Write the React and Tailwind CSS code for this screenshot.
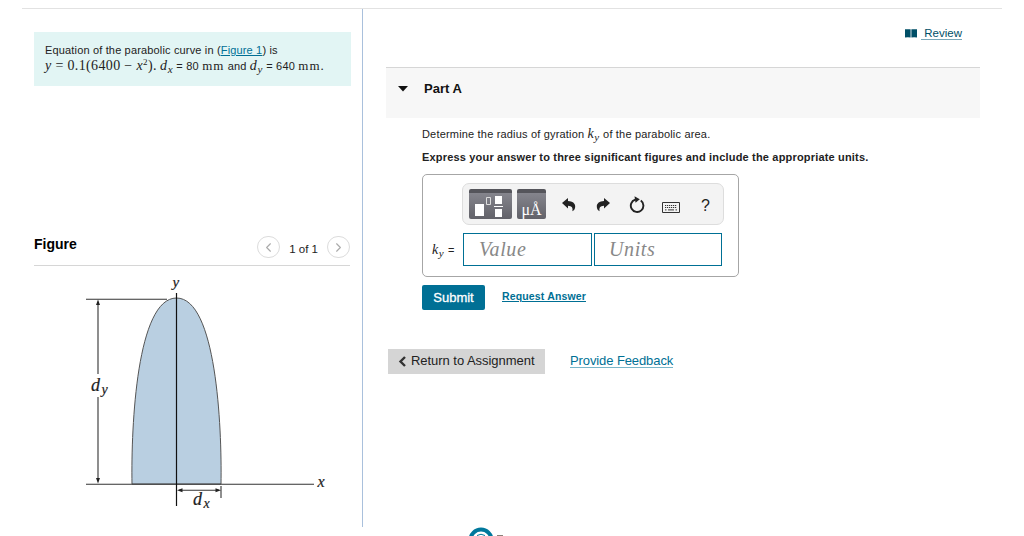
import { ChevronLeft, ChevronRight } from 'lucide-react';

const MathVar = ({ name, sub, className = '' }) => (
    <span className={`font-['Liberation_Serif',serif] text-[14px] tracking-[0.6px] italic ${className}`}>
        {name}
        {sub && <span className="relative top-[3px] text-[11px]">{sub}</span>}
    </span>
);

const Unit = ({ children }) => (
    <span className="font-['Liberation_Serif',serif] text-[13px] tracking-[1px]">{children}</span>
);

const NavButton = ({ label, children }) => (
    <button aria-label={label} className="flex h-[22px] w-[23px] items-center justify-center rounded-full border border-[#dcdcdc] text-[#aaa]">
        {children}
    </button>
);

// Parabola with the dx / dy dimension lines
const ParabolaFigure = () => (
    <svg width="270" height="246" viewBox="70 270 270 246" className="ml-[70px] block" fill="none">
        <path d="M132 484C131 425 137 298 176.500 298C216 298 222 425 221 484Z" fill="#b9cfe1" stroke="#555" />
        <g stroke="#333" strokeWidth="1.100">
            <path d="M86 299.300H167" />
            <path d="M86 484.300H314" />
            <path d="M98 302V374M98 397V481" />
            <path d="M179 490.300H219" />
            <path d="M221 486V498" />
        </g>
        <path d="M176.500 293V506" stroke="#111" strokeWidth="1.200" />
        <g fill="#222">
            <path d="M98 299.500L96 305H100Z" />
            <path d="M98 483.500L96 478H100Z" />
            <path d="M177 490.300L182.500 488.300V492.300Z" />
            <path d="M221 490.300L215.500 488.300V492.300Z" />
        </g>
        <g fill="#222" stroke="#222" strokeWidth="0.200" className="font-['Liberation_Serif',serif] italic">
            <text x="172.500" y="287" fontSize="15">y</text>
            <text x="317.500" y="487" fontSize="16">x</text>
            <text x="91" y="391" fontSize="18">d</text>
            <text x="101.500" y="394" fontSize="14">y</text>
            <text x="193" y="505" fontSize="18">d</text>
            <text x="203.500" y="508" fontSize="14">x</text>
        </g>
    </svg>
);

const TemplateIcon = () => (
    <svg width="43" height="29" viewBox="0 0 43 29">
        <path d="M6 14H15V26H6ZM26 6H33V14H26ZM26 19H33V27H26ZM25 16H34V17H25Z" fill="#fff" />
        <path d="M17.500 7.500H21.500V14.500H17.500Z" fill="none" stroke="#ddd" />
    </svg>
);

const UndoIcon = ({ className = '' }) => (
    <svg width="14" height="16" viewBox="0 0 14 16" className={className}>
        <path d="M0 7L6 2V5C10.500 5.200 13.200 7.300 13.200 10.500C13.200 12.800 12.200 14.500 10.300 15.300C11.200 12 10 9.800 6 9.700V12.500Z" fill="#222" />
    </svg>
);

const ResetIcon = () => (
    <svg width="16" height="17" viewBox="0 0 16 17">
        <path d="M11.800 4.600A6.300 6.300 0 1 1 6.200 3.700" fill="none" stroke="#222" strokeWidth="1.900" />
        <path d="M5.500 0.300L10.800 3.200L6.500 6.700Z" fill="#222" />
    </svg>
);

const KeyboardIcon = () => (
    <svg width="18" height="11" viewBox="0 0 18 11" fill="none" stroke="#333">
        <path d="M0.500 0.500H17.500V10.500H0.500Z" />
        <path d="M3 3.500H15M3 5.500H15" strokeWidth="1.200" strokeDasharray="1.200 0.800" />
        <path d="M3 7.900H4.500M6 7.900H12M13.500 7.900H15" />
    </svg>
);

const Sidebar = () => (
    <aside className="h-[518px] w-[363px] shrink-0 border-r border-[#a9c0dc] pt-[23px]">
        <div className="ml-[34px] h-[54px] w-[317px] bg-[#e2f5f4] pt-[11px] pl-[11px] text-[11px] leading-[15px] whitespace-nowrap text-[#222]">
            <p className="h-[15px] tracking-[0.16px]">
                Equation of the parabolic curve in (<a className="text-[#006f94] underline">Figure 1</a>) is
            </p>
            <p className="h-[17px] leading-[15px] tracking-[0.2px]">
                <span className="font-['Liberation_Serif',serif] text-[14px] tracking-[0.35px]">
                    <i>y</i> = 0.1(6400 − <i>x</i>
                    <span className="relative -top-[5px] text-[9px]">2</span>).
                </span>{' '}
                <MathVar name="d" sub="x" /> = 80 <Unit>mm</Unit> and <MathVar name="d" sub="y" /> = 640 <Unit>mm.</Unit>
            </p>
        </div>

        <div className="mt-[148px] ml-[34px] flex h-[32px] w-[316px] items-start border-b border-[#d6d6d6]">
            <h2 className="text-[14px] leading-[21px] font-bold text-black">Figure</h2>
            <div className="mt-[2px] ml-auto flex items-center">
                <NavButton label="Previous"><ChevronLeft size={15} strokeWidth={1.8} /></NavButton>
                <span className="mr-[9px] ml-[9px] pt-[3px] text-[11.500px] leading-[18px] whitespace-nowrap text-[#222]">1 of 1</span>
                <NavButton label="Next"><ChevronRight size={15} strokeWidth={1.8} /></NavButton>
            </div>
        </div>
        <div className="pt-[4px]">
            <ParabolaFigure />
        </div>
    </aside>
);

const AnswerBox = () => (
    <div className="mt-[9px] h-[103px] w-[317px] rounded-[5px] border border-[#a6a6a6] pt-[8px]">
        <div className="ml-[39px] flex h-[42px] w-[262px] items-center rounded-[7px] border border-[#ddd] bg-[#f3f3f3] pl-[6px] text-[#222]">
            <button className="h-[30px] w-[43px] rounded-[2px] border-t-4 border-[#55555b] bg-linear-to-b from-[#85858d] to-[#626269]">
                <div className="-mt-[4px]"><TemplateIcon /></div>
            </button>
            <button className="ml-[5px] h-[30px] w-[29px] rounded-[2px] border-t-4 border-[#55555b] bg-linear-to-b from-[#85858d] to-[#626269] pt-[6px] font-['Liberation_Serif',serif] text-[16px] leading-[22px] text-white">
                μÅ
            </button>
            <UndoIcon className="ml-[16px]" />
            <UndoIcon className="ml-[20px] -scale-x-100" />
            <div className="mt-[1px] ml-[19px]"><ResetIcon /></div>
            <div className="mt-[7px] ml-[17px]"><KeyboardIcon /></div>
            <span className="mt-[3px] ml-[21px] text-[16px]">?</span>
        </div>
        <div className="mt-[8px] flex h-[33px] items-center text-[11px] text-[#222]">
            <div className="w-[40px] pl-[9px] tracking-[0.7px] whitespace-nowrap">
                <MathVar name="k" sub="y" /> =
            </div>
            <input
                placeholder="Value"
                className="h-[33px] w-[129px] border border-[#007095] bg-white pl-[15px] font-['Liberation_Serif',serif] text-[20px] tracking-[0.6px] italic placeholder:text-[#888]"
            />
            <input
                placeholder="Units"
                className="ml-[2px] h-[33px] w-[128px] border border-[#007095] bg-white pl-[14px] font-['Liberation_Serif',serif] text-[20px] tracking-[0.6px] italic placeholder:text-[#888]"
            />
        </div>
    </div>
);

const MainPanel = () => (
    <main className="flex h-[527px] w-[661px] flex-col overflow-hidden">
        <div className="mt-[16px] mr-[62px] flex h-[17px] items-center justify-end text-[11.500px] text-[#004f67]">
            <svg width="12" height="9" viewBox="0 0 12 9" className="mr-[4px]" fill="#004f67">
                <path d="M0 0.300H5.600V8.500Q3 7.800 0 8.500ZM6.400 0.300H12V8.500Q9 7.800 6.400 8.500Z" />
            </svg>
            <a className="border-b border-[#79a7b8] pl-[3px] leading-[12px]">Review</a>
        </div>

        <div className="mt-[25px] ml-[23px] flex h-[51px] w-[594px] items-start border-t border-[#d6d6d6] bg-[#f7f7f7] pt-[13px]">
            <svg width="10" height="6" viewBox="0 0 10 6" className="mt-[5px] ml-[12px]">
                <path d="M0 0H10L5 5.500Z" fill="#111" />
            </svg>
            <h3 className="ml-[16px] text-[13px] leading-[16px] font-bold text-[#111]">Part A</h3>
        </div>

        <div className="ml-[59px] text-[11px] whitespace-nowrap text-[#222]">
            <p className="mt-[7px] h-[18px] leading-[17px] tracking-[0.18px]">
                Determine the radius of gyration <MathVar name="k" sub="y" /> of the parabolic area.
            </p>
            <p className="mt-[6px] h-[16px] leading-[16px] font-bold tracking-[0.18px]">
                Express your answer to three significant figures and include the appropriate units.
            </p>
            <AnswerBox />
            <div className="mt-[8px] flex h-[25px] items-center">
                <button className="h-[25px] w-[63px] rounded-[2px] bg-[#007095] text-[13px] text-white [-webkit-text-stroke:0.3px_white]">Submit</button>
                <a className="ml-[17px] pb-[1px] text-[10.500px] font-bold tracking-[0.15px] text-[#006f94] underline">Request Answer</a>
            </div>
        </div>

        <div className="mt-[39px] ml-[25px] flex h-[25px] items-center whitespace-nowrap">
            <button className="flex h-[25px] w-[157px] items-center bg-[#d5d5d5] pb-[1px] pl-[10px] text-[13px] tracking-[-0.04px] text-[#222]">
                <svg width="9" height="11" viewBox="0 0 9 11" className="mr-[4px]">
                    <path d="M7 1L2.500 5.500L7 10" fill="none" stroke="#333" strokeWidth="2.400" />
                </svg>
                Return to Assignment
            </button>
            <a className="mb-[1px] ml-[25px] border-b border-[#79b6c9] text-[13px] leading-[13px] tracking-[-0.1px] text-[#007095]">Provide Feedback</a>
        </div>

        {/* footer mark, cut off by the window */}
        <svg width="40" height="9" viewBox="0 0 40 9" className="mt-auto ml-[106px] block">
            <circle cx="12" cy="13" r="10.500" fill="none" stroke="#00789c" strokeWidth="4" />
            <path d="M8 8.500Q12 6 16 8.500" fill="none" stroke="#00789c" strokeWidth="1" />
            <path d="M28 8H34V9H28Z" fill="#8b8179" />
        </svg>
    </main>
);

const App = () => (
    <div className="h-[536px] w-[1024px] overflow-hidden bg-white font-['Liberation_Sans',Arial,sans-serif]">
        <div className="mx-[22px] h-[9px] border-b border-[#e2e2e2]" />
        <div className="flex">
            <Sidebar />
            <MainPanel />
        </div>
    </div>
);

export default App;
